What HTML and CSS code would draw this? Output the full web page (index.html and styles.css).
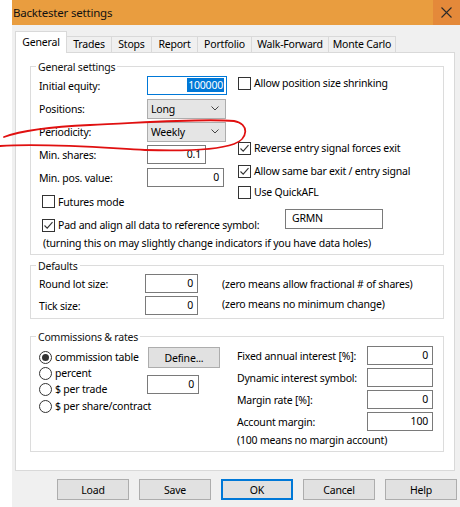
FILE: index.html
```html
<!DOCTYPE html>
<html>
<head>
<meta charset="utf-8">
<link rel="stylesheet" href="styles.css">
</head>
<body>
<div class="window">
  <div class="titlebar">
    <span class="title">Backtester settings</span>
    <span class="close"><svg width="11" height="11" viewBox="0 0 11 11"><path d="M0.5 0.5 L10.5 10.5 M10.5 0.5 L0.5 10.5" stroke="#2a2a2a" stroke-width="1.1" fill="none"/></svg></span>
  </div>
  <div class="tabs">
    <div class="tab tab-active t-general">General</div>
    <div class="tab t-trades">Trades</div>
    <div class="tab t-stops">Stops</div>
    <div class="tab t-report">Report</div>
    <div class="tab t-portfolio">Portfolio</div>
    <div class="tab t-walk">Walk-Forward</div>
    <div class="tab t-monte">Monte Carlo</div>
  </div>
  <div class="panel">
    <div class="group g-general">
      <div class="legend">General settings</div>
      <div class="gen-grid">
        <div class="gen-left">
          <div class="row first"><span class="lbl">Initial equity:</span><div class="edit focus w-equity"><span class="sel">100000</span></div></div>
          <div class="row"><span class="lbl">Positions:</span><div class="combo"><span>Long</span><svg width="8" height="5" viewBox="0 0 8 5"><path d="M0.5 0.5 L4 4 L7.5 0.5" stroke="#444" stroke-width="1" fill="none"/></svg></div></div>
          <div class="row"><span class="lbl">Periodicity:</span><div class="combo"><span>Weekly</span><svg width="8" height="5" viewBox="0 0 8 5"><path d="M0.5 0.5 L4 4 L7.5 0.5" stroke="#444" stroke-width="1" fill="none"/></svg></div></div>
          <div class="row"><span class="lbl">Min. shares:</span><div class="edit w-shares">0.1</div></div>
          <div class="row"><span class="lbl">Min. pos. value:</span><div class="edit w-posval">0</div></div>
          <div class="check futures"><span class="box"></span><span>Futures mode</span></div>
        </div>
        <div class="gen-right">
          <div class="check c-shrink"><span class="box"></span><span>Allow position size shrinking</span></div>
          <div class="check c-reverse"><span class="box"><svg width="11" height="11" viewBox="0 0 11 11"><path d="M1.5 5.5 L4.2 8.2 L9.5 2.2" stroke="#333" stroke-width="1.1" fill="none"/></svg></span><span>Reverse entry signal forces exit</span></div>
          <div class="check c-same"><span class="box"><svg width="11" height="11" viewBox="0 0 11 11"><path d="M1.5 5.5 L4.2 8.2 L9.5 2.2" stroke="#333" stroke-width="1.1" fill="none"/></svg></span><span>Allow same bar exit / entry signal</span></div>
          <div class="check c-quick"><span class="box"></span><span>Use QuickAFL</span></div>
        </div>
      </div>
      <div class="pad-row">
        <div class="check pad-check"><span class="box"><svg width="11" height="11" viewBox="0 0 11 11"><path d="M1.5 5.5 L4.2 8.2 L9.5 2.2" stroke="#333" stroke-width="1.1" fill="none"/></svg></span><span>Pad and align all data to reference symbol:</span></div>
        <div class="edit left w-grmn">GRMN</div>
      </div>
      <div class="note n-pad">(turning this on may slightly change indicators if you have data holes)</div>
    </div>

    <div class="group g-defaults">
      <div class="legend">Defaults</div>
      <div class="drow first"><span class="lbl-d">Round lot size:</span><div class="edit w-small">0</div><span class="hint">(zero means allow fractional # of shares)</span></div>
      <div class="drow"><span class="lbl-d">Tick size:</span><div class="edit w-small">0</div><span class="hint hint-up">(zero means no minimum change)</span></div>
    </div>

    <div class="group g-comm">
      <div class="legend">Commissions &amp; rates</div>
      <div class="comm-grid">
        <div class="radios">
          <div class="radio"><span class="dot on"></span><span>commission table</span></div>
          <div class="radio"><span class="dot"></span><span>percent</span></div>
          <div class="radio"><span class="dot"></span><span>$ per trade</span></div>
          <div class="radio last"><span class="dot"></span><span>$ per share/contract</span></div>
        </div>
        <div class="comm-mid">
          <div class="btn define">Define...</div>
          <div class="edit w-pertrade">0</div>
        </div>
        <div class="comm-right">
          <div class="frow first"><span class="lbl-f">Fixed annual interest [%]:</span><div class="edit w-f">0</div></div>
          <div class="frow"><span class="lbl-f">Dynamic interest symbol:</span><div class="edit w-f"></div></div>
          <div class="frow"><span class="lbl-f">Margin rate [%]:</span><div class="edit w-f">0</div></div>
          <div class="frow"><span class="lbl-f">Account margin:</span><div class="edit w-f">100</div></div>
          <div class="note n-margin">(100 means no margin account)</div>
        </div>
      </div>
    </div>
  </div>
  <div class="buttons">
    <div class="btn">Load</div>
    <div class="btn">Save</div>
    <div class="btn ok">OK</div>
    <div class="btn">Cancel</div>
    <div class="btn">Help</div>
  </div>
</div>
<svg class="annot" width="250" height="40" viewBox="0 115 250 40">
  <path d="M4 137 C 20 131, 45 127, 90 125 C 140 123, 200 118, 234 121 C 250 124, 248 139, 234 144 C 214 151, 175 151, 145 150 C 105 148, 50 143, 0 146" stroke="#e01010" stroke-width="1.8" fill="none" stroke-linecap="round"/>
</svg>
</body>
</html>
```

FILE: styles.css
```css
* { box-sizing: border-box; }
html, body { margin: 0; padding: 0; background: #ffffff; }
body {
  font-family: "Noto Sans", "Open Sans", sans-serif;
  font-size: 10.5px;
  letter-spacing: -0.2px;
  color: #000;
  position: relative;
  width: 460px;
  height: 507px;
  overflow: hidden;
}
.window {
  margin-left: 12px;
  width: 448px;
  height: 507px;
  background: #f0f0f0;
}
.titlebar {
  height: 25px;
  background: #e99d3f;
  display: flex;
  align-items: center;
  justify-content: space-between;
}
.title {
  padding-left: 1px;
  font-size: 11.5px;
  letter-spacing: -0.2px;
  color: #111;
}
.close {
  width: 27px;
  height: 25px;
  background: #e4893a;
  display: flex;
  align-items: center;
  justify-content: center;
}
.close svg { display: block; }

/* tabs */
.tabs {
  height: 27px;
  display: flex;
  align-items: flex-end;
  padding-left: 3px;
}
.tab {
  height: 16px;
  line-height: 15px;
  text-align: center;
  background: #f0f0f0;
  border: 1px solid #d9d9d9;
  border-bottom: none;
  margin-left: -1px;
  white-space: nowrap;
}
.tab-active {
  height: 22px;
  line-height: 20px;
  background: #ffffff;
  margin-left: 0;
  margin-bottom: -1px;
  position: relative;
  z-index: 1;
}
.t-general { width: 52px; }
.t-trades { width: 45px; margin-left: 0; border-left: none; }
.t-stops { width: 41px; }
.t-report { width: 47px; }
.t-portfolio { width: 55px; }
.t-walk { width: 78px; }
.t-monte { width: 68px; }

.panel {
  margin-left: 3px;
  width: 440px;
  height: 419px;
  background: #ffffff;
  border: 1px solid #d9d9d9;
}

/* group boxes */
.group {
  margin-left: 14px;
  width: 414px;
  border: 1px solid #dcdcdc;
  padding: 0 0 3px 8px;
}
.g-general { margin-top: 13px; }
.g-defaults { margin-top: 10px; }
.g-comm { margin-top: 17px; }
.legend {
  margin: -8px 0 0 -3px;
  padding: 0 2px;
  background: #ffffff;
  width: max-content;
  height: 16px;
  line-height: 16px;
  color: #111;
}

/* inputs */
.edit {
  height: 19px;
  border: 1px solid #7a7a7a;
  background: #fff;
  text-align: right;
  padding: 0 4px;
  line-height: 17px;
  white-space: nowrap;
  overflow: hidden;
}
.edit.left { text-align: left; padding-left: 6px; }
.edit.focus { border-color: #0078d7; padding-right: 2px; }
.sel {
  background: #0078d7;
  color: #fff;
  display: inline-block;
  line-height: 14px;
  padding: 0 1px 0 1px;
}
.w-equity { width: 80px; }
.w-shares { width: 59px; }
.w-posval { width: 77px; }
.w-grmn { width: 98px; height: 20px; margin-top: -6px; }
.w-small { width: 53px; }
.w-pertrade { width: 52px; margin-top: 7px; }
.w-f { width: 66px; }

.combo {
  width: 79px;
  height: 20px;
  border: 1px solid #adadad;
  background: #e5e5e5;
  display: flex;
  align-items: center;
  justify-content: space-between;
  padding: 0 6px 0 3px;
}
.combo svg { display: block; }

/* general settings layout */
.gen-grid {
  display: grid;
  grid-template-columns: 199px 1fr;
}
.row {
  display: flex;
  align-items: center;
  height: 19px;
  margin-top: 4px;
}
.row.first { margin-top: 1px; }
.lbl { width: 108px; }

.check {
  display: flex;
  align-items: center;
  height: 16px;
  white-space: nowrap;
}
.box {
  width: 13px;
  height: 13px;
  border: 1px solid #333;
  background: #fff;
  margin-right: 3px;
  display: flex;
  align-items: center;
  justify-content: center;
  flex: none;
}
.box svg { display: block; }
.futures { margin-top: 5px; height: 19px; padding-left: 3px; }
.c-shrink { margin-top: 0; }
.c-reverse { margin-top: 49px; }
.c-same { margin-top: 7px; }
.c-quick { margin-top: 5px; }

.pad-row {
  display: flex;
  align-items: center;
  height: 20px;
  margin-top: 1px;
}
.pad-check { width: 246px; padding-left: 3px; margin-top: 6px; }
.note {
  height: 16px;
  line-height: 16px;
  white-space: nowrap;
}
.n-pad { margin-top: 3px; padding-left: 4px; }

/* defaults */
.drow {
  display: flex;
  align-items: center;
  height: 19px;
  margin-top: 3px;
}
.drow.first { margin-top: 0; }
.lbl-d { width: 106px; }
.hint { margin-left: 24px; white-space: nowrap; }
.hint-up { margin-top: -4px; }

/* commissions */
.comm-grid {
  display: grid;
  grid-template-columns: 108px 90px 1fr;
}
.radios { margin-top: 4px; }
.radio {
  display: flex;
  align-items: center;
  height: 16px;
  white-space: nowrap;
}
.radio.last { margin-top: 1px; }
.dot {
  width: 13px;
  height: 13px;
  border: 1px solid #333;
  border-radius: 50%;
  background: #fff;
  margin-right: 3px;
  display: flex;
  align-items: center;
  justify-content: center;
  flex: none;
}
.dot.on::after {
  content: "";
  width: 7px;
  height: 7px;
  border-radius: 50%;
  background: #333;
}
.define { margin-top: 2px; margin-left: 1px; width: 74px; height: 20px; }
.frow {
  display: flex;
  align-items: center;
  height: 19px;
  margin-top: 3px;
}
.frow.first { margin-top: 1px; }
.lbl-f { width: 130px; white-space: nowrap; }
.n-margin { margin-top: 1px; }

/* buttons */
.btn {
  width: 72px;
  height: 21px;
  border: 1px solid #adadad;
  background: #e1e1e1;
  display: flex;
  align-items: center;
  justify-content: center;
}
.btn.ok { border: 2px solid #0078d7; }
.buttons {
  display: flex;
  justify-content: flex-end;
  gap: 10px;
  padding-right: 3px;
  margin-top: 8px;
}

.annot {
  position: absolute;
  left: 0;
  top: 115px;
}
```
